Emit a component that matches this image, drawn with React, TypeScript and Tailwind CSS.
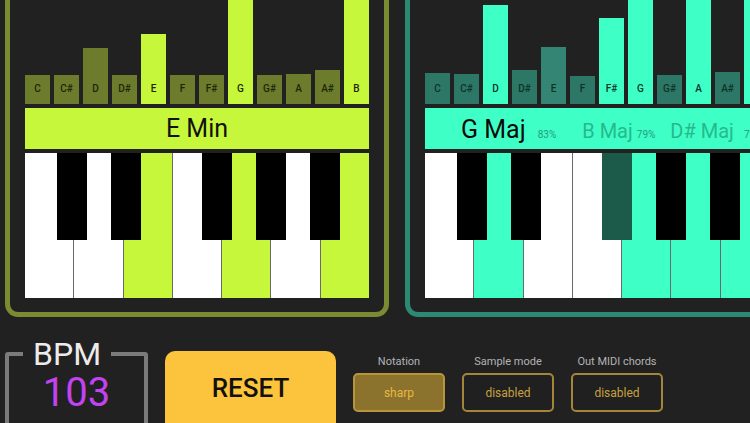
import React from "react";

type Bar = { note: string; h: number; on: boolean; mid?: boolean };

const leftBars: Bar[] = [
  { note: "C", h: 29, on: false },
  { note: "C#", h: 29, on: false },
  { note: "D", h: 56, on: false },
  { note: "D#", h: 29, on: false },
  { note: "E", h: 70, on: true },
  { note: "F", h: 29, on: false },
  { note: "F#", h: 29, on: false },
  { note: "G", h: 129, on: true },
  { note: "G#", h: 29, on: false },
  { note: "A", h: 30, on: false },
  { note: "A#", h: 34, on: false },
  { note: "B", h: 129, on: true },
];

const rightBars: Bar[] = [
  { note: "C", h: 31, on: false },
  { note: "C#", h: 30, on: false },
  { note: "D", h: 99, on: true },
  { note: "D#", h: 34, on: false },
  { note: "E", h: 57, on: false, mid: true },
  { note: "F", h: 28, on: false },
  { note: "F#", h: 86, on: true },
  { note: "G", h: 129, on: true },
  { note: "G#", h: 29, on: false },
  { note: "A", h: 129, on: true },
  { note: "A#", h: 32, on: false },
  { note: "B", h: 129, on: true },
];

const blackLeft = [32, 86, 177, 231, 285];

type Theme = {
  border: string;
  on: string;
  off: string;
  mid: string;
  label: string;
};

const lime: Theme = {
  border: "border-[#7a8b32]",
  on: "bg-[#c6f73b]",
  off: "bg-[#6c7c2c]",
  mid: "bg-[#6c7c2c]",
  label: "text-[#1d2608]",
};

const teal: Theme = {
  border: "border-[#2d8a72]",
  on: "bg-[#3effc6]",
  off: "bg-[#2c7765]",
  mid: "bg-[#348573]",
  label: "text-[#0c3328]",
};

function Bars({ bars, theme }: { bars: Bar[]; theme: Theme }) {
  return (
    <div className="flex h-[129px] items-end gap-[4px]">
      {bars.map((b) => (
        <div
          key={b.note}
          className={`flex w-[25px] shrink-0 items-end justify-center pb-[10px] ${
            b.on ? theme.on : b.mid ? theme.mid : theme.off
          }`}
          style={{ height: b.h }}
        >
          <span className={`text-[10px] font-medium leading-none ${theme.label}`}>{b.note}</span>
        </div>
      ))}
    </div>
  );
}

function Keyboard({ whites, blacks }: { whites: string[]; blacks: string[] }) {
  return (
    <div className="relative flex h-[145px] w-[344px]">
      {whites.map((c, i) => (
        <div key={i} className={`h-full flex-1 ${c} ${i > 0 ? "border-l border-[#6a6a6a]" : ""}`} />
      ))}
      {blackLeft.map((x, i) => (
        <div
          key={x}
          className={`absolute top-0 h-[87px] w-[30px] ${blacks[i]}`}
          style={{ left: x }}
        />
      ))}
    </div>
  );
}

function Panel({ theme, children }: { theme: Theme; children: React.ReactNode }) {
  return (
    <div
      className={`-mt-[30px] flex w-[384px] shrink-0 flex-col gap-[4px] rounded-[13px] border-[5px] ${theme.border} px-[15px] pb-[14px]`}
    >
      {children}
    </div>
  );
}

function Toggle({ label, value, active }: { label: string; value: string; active?: boolean }) {
  return (
    <div className="flex w-[92px] flex-col items-center gap-[4px] pt-[4px]">
      <span className="text-[11px] leading-[14px] text-[#b3b3b3]">{label}</span>
      <div
        className={`flex h-[39px] w-[92px] items-center justify-center rounded-[5px] border-2 text-[12px] ${
          active
            ? "border-[#b89539] bg-[#8b722d] text-[#e8b843]"
            : "border-[#a3863a] bg-[#202020] text-[#c9a13f]"
        }`}
      >
        {value}
      </div>
    </div>
  );
}

export default function App() {
  return (
    <div
      className="h-[423px] w-[750px] overflow-hidden bg-[#212121]"
      style={{ fontFamily: "Roboto, 'Noto Sans', sans-serif" }}
    >
      <div className="flex gap-[16px] pl-[5px]">
        <Panel theme={lime}>
          <Bars bars={leftBars} theme={lime} />
          <div className="flex h-[41px] items-center justify-center bg-[#c6f73b]">
            <span className="text-[25px] leading-none text-[#111]">E Min</span>
          </div>
          <Keyboard
            whites={["bg-white", "bg-white", "bg-[#c6f73b]", "bg-white", "bg-[#c6f73b]", "bg-white", "bg-[#c6f73b]"]}
            blacks={["bg-black", "bg-black", "bg-black", "bg-black", "bg-black"]}
          />
        </Panel>
        <Panel theme={teal}>
          <Bars bars={rightBars} theme={teal} />
          <div className="flex h-[41px] w-[400px] items-baseline whitespace-nowrap bg-[#3effc6] pl-[36px] pt-[9px]">
            <span className="text-[25px] leading-none text-[#0b0b0b]">G Maj</span>
            <span className="ml-[12px] text-[10px] text-[#1f9e7b]">83%</span>
            <span className="ml-[26px] text-[20px] leading-none text-[#27b98d]">B Maj</span>
            <span className="ml-[4px] text-[10px] text-[#1f9e7b]">79%</span>
            <span className="ml-[15px] text-[20px] leading-none text-[#27b98d]">D# Maj</span>
            <span className="ml-[10px] text-[10px] text-[#1f9e7b]">7%</span>
          </div>
          <Keyboard
            whites={["bg-white", "bg-[#3effc6]", "bg-white", "bg-white", "bg-[#3effc6]", "bg-[#3effc6]", "bg-[#3effc6]"]}
            blacks={["bg-black", "bg-black", "bg-[#1c5a49]", "bg-black", "bg-black"]}
          />
        </Panel>
      </div>

      <div className="mt-[34px] flex items-start gap-[17px] pl-[5px]">
        <div className="relative mt-[1px] flex h-[90px] w-[143px] justify-center rounded-[3px] border-4 border-[#7b7b7b] pt-[17px]">
          <span className="absolute -top-[18px] left-[14px] bg-[#212121] px-[10px] text-[32px] leading-none text-[#ececec]">
            BPM
          </span>
          <span className="text-[40px] leading-none text-[#c343f2]">103</span>
        </div>
        <div className="flex h-[90px] w-[171px] items-start justify-center rounded-[10px] bg-[#fcc43c] pt-[24px]">
          <span className="text-[26px] font-medium leading-none text-[#111]">RESET</span>
        </div>
        <Toggle label="Notation" value="sharp" active />
        <Toggle label="Sample mode" value="disabled" />
        <Toggle label="Out MIDI chords" value="disabled" />
      </div>
    </div>
  );
}
